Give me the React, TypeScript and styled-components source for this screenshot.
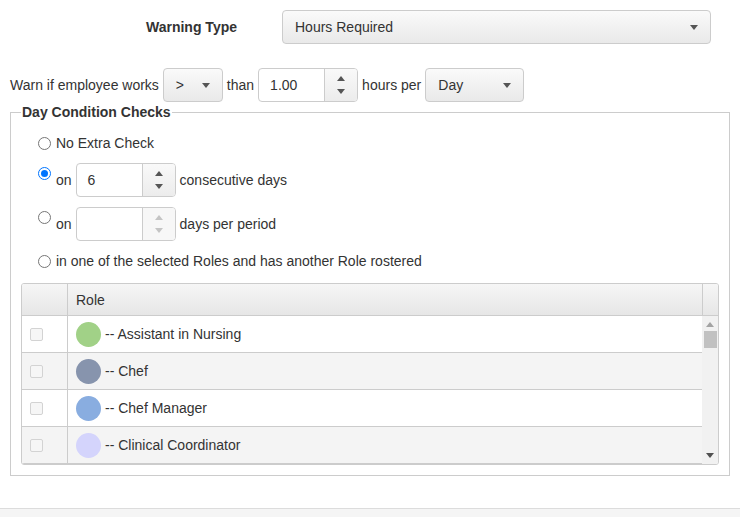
import React from "react";
import styled, { createGlobalStyle } from "styled-components";

const GlobalStyle = createGlobalStyle`
  html, body {
    margin: 0;
    padding: 0;
    background: #fff;
  }
  body {
    font-family: "Liberation Sans", Arial, sans-serif;
    font-size: 14px;
    color: #333;
  }
`;

const Page = styled.div`
  width: 740px;
  height: 517px;
  overflow: hidden;
  display: flex;
  flex-direction: column;
  padding-top: 10px;
  box-sizing: border-box;
`;

const TypeRow = styled.div`
  display: flex;
  align-items: center;
  padding-left: 10px;
  gap: 45px;
  height: 34px;
`;

const TypeLabel = styled.label`
  width: 227px;
  text-align: right;
  font-weight: bold;
`;

const WarnRow = styled.div`
  display: flex;
  align-items: center;
  gap: 4px;
  padding-left: 10px;
  margin-top: 24px;
  height: 34px;
`;

const SelectBox = styled.div<{ $width: number }>`
  width: ${({ $width }) => $width}px;
  height: 34px;
  box-sizing: border-box;
  display: flex;
  align-items: center;
  justify-content: space-between;
  padding: 0 12px;
  border: 1px solid #ccc;
  border-radius: 4px;
  background: linear-gradient(#fafafa, #e9e9e9);
  color: #333;
`;

const Caret = styled.span<{ $color?: string }>`
  width: 0;
  height: 0;
  border-left: 4px solid transparent;
  border-right: 4px solid transparent;
  border-top: 5px solid ${({ $color }) => $color || "#555"};
`;

const CaretUp = styled.span<{ $color?: string }>`
  width: 0;
  height: 0;
  border-left: 4px solid transparent;
  border-right: 4px solid transparent;
  border-bottom: 5px solid ${({ $color }) => $color || "#555"};
`;

const Spinner = styled.div`
  width: 100px;
  height: 34px;
  box-sizing: border-box;
  display: flex;
  border: 1px solid #ccc;
  border-radius: 4px;
  background: #fff;
  overflow: hidden;
`;

const SpinValue = styled.div`
  flex: 1;
  display: flex;
  align-items: center;
  padding-left: 11px;
`;

const SpinButtons = styled.div<{ $disabled?: boolean }>`
  width: 32px;
  border-left: 1px solid #ccc;
  background: ${({ $disabled }) => ($disabled ? "#f7f7f7" : "linear-gradient(#f9f9f9, #ececec)")};
  display: flex;
  flex-direction: column;
  align-items: center;
  justify-content: center;
  gap: 8px;
`;

const Fieldset = styled.fieldset`
  margin: 2px 0 0 10px;
  width: 720px;
  box-sizing: border-box;
  border: 1px solid #ccc;
  padding: 0 10px 10px 10px;
`;

const Legend = styled.legend`
  font-weight: bold;
  padding: 0 1px;
  line-height: 16px;
`;

const OptionList = styled.div`
  display: flex;
  flex-direction: column;
  gap: 10px;
  padding: 13px 0 0 17px;
`;

const Option = styled.label<{ $tall?: boolean }>`
  display: flex;
  align-items: center;
  height: ${({ $tall }) => ($tall ? 34 : 20)}px;
  gap: 4px;
`;

const Radio = styled.span<{ $checked?: boolean; $top?: boolean }>`
  width: 13px;
  height: 13px;
  box-sizing: border-box;
  border-radius: 50%;
  border: 1px solid ${({ $checked }) => ($checked ? "#0075ff" : "#767676")};
  background: #fff;
  align-self: ${({ $top }) => ($top ? "flex-start" : "center")};
  margin-top: ${({ $top }) => ($top ? 4 : 0)}px;
  margin-right: 1px;
  display: flex;
  align-items: center;
  justify-content: center;
  flex-shrink: 0;

  &::after {
    content: "";
    width: 7px;
    height: 7px;
    border-radius: 50%;
    background: ${({ $checked }) => ($checked ? "#0075ff" : "transparent")};
  }
`;

const Grid = styled.div`
  margin-top: 12px;
  border: 1px solid #ccc;
  border-radius: 3px;
  overflow: hidden;
`;

const GridHeader = styled.div`
  display: flex;
  height: 31px;
  border-bottom: 1px solid #ccc;
  background: linear-gradient(#f6f6f6, #e6e6e6);
`;

const CheckCol = styled.div`
  width: 37px;
  padding-left: 8px;
  border-right: 1px solid #ccc;
  display: flex;
  align-items: center;
  flex-shrink: 0;
`;

const RoleHeader = styled.div`
  flex: 1;
  display: flex;
  align-items: center;
  padding-left: 8px;
  border-right: 1px solid #ccc;
`;

const ScrollHeader = styled.div`
  width: 15px;
`;

const GridBody = styled.div`
  display: flex;
  height: 148px;
  overflow: hidden;
`;

const Rows = styled.div`
  flex: 1;
  display: flex;
  flex-direction: column;
`;

const Row = styled.div<{ $alt: boolean }>`
  display: flex;
  height: 36px;
  flex-shrink: 0;
  border-bottom: 1px solid #ccc;
  background: ${({ $alt }) => ($alt ? "#f4f4f4" : "#fff")};
`;

const Checkbox = styled.span`
  width: 13px;
  height: 13px;
  box-sizing: border-box;
  border: 1px solid #d3d3d3;
  border-radius: 2px;
  background: #f6f6f6;
`;

const RoleCell = styled.div`
  flex: 1;
  display: flex;
  align-items: center;
  padding-left: 8px;
  gap: 4px;
`;

const Dot = styled.span<{ $color: string }>`
  width: 25px;
  height: 25px;
  border-radius: 50%;
  background: ${({ $color }) => $color};
`;

const ScrollTrack = styled.div`
  width: 16px;
  background: #f1f1f1;
  display: flex;
  flex-direction: column;
  align-items: center;
  padding: 6px 0 6px;
  box-sizing: border-box;
`;

const Thumb = styled.div`
  width: 13px;
  height: 17px;
  background: #c1c1c1;
  margin-top: 4px;
`;

const Spacer = styled.div`
  flex: 1;
`;

const Footer = styled.div`
  margin-top: auto;
  height: 8px;
  border-top: 1px solid #dcdcdc;
  background: #f5f5f5;
`;

const roles = [
  { name: "Assistant in Nursing", color: "#a1d187" },
  { name: "Chef", color: "#8794ad" },
  { name: "Chef Manager", color: "#89ade0" },
  { name: "Clinical Coordinator", color: "#d4d4fc" },
];

function NumberSpinner({ value, disabled }: { value: string; disabled?: boolean }) {
  const arrow = disabled ? "#c4c4c4" : "#555";
  return (
    <Spinner>
      <SpinValue>{value}</SpinValue>
      <SpinButtons $disabled={disabled}>
        <CaretUp $color={arrow} />
        <Caret $color={arrow} />
      </SpinButtons>
    </Spinner>
  );
}

export default function App() {
  return (
    <>
      <GlobalStyle />
      <Page>
        <TypeRow>
          <TypeLabel>Warning Type</TypeLabel>
          <SelectBox $width={429}>
            Hours Required
            <Caret />
          </SelectBox>
        </TypeRow>

        <WarnRow>
          <span>Warn if employee works</span>
          <SelectBox $width={60}>
            &gt;
            <Caret />
          </SelectBox>
          <span>than</span>
          <NumberSpinner value="1.00" />
          <span>hours per</span>
          <SelectBox $width={99}>
            Day
            <Caret />
          </SelectBox>
        </WarnRow>

        <Fieldset>
          <Legend>Day Condition Checks</Legend>
          <OptionList>
            <Option>
              <Radio />
              No Extra Check
            </Option>
            <Option $tall>
              <Radio $checked $top />
              on
              <NumberSpinner value="6" />
              <span>consecutive days</span>
            </Option>
            <Option $tall>
              <Radio $top />
              on
              <NumberSpinner value="" disabled />
              <span>days per period</span>
            </Option>
            <Option>
              <Radio />
              in one of the selected Roles and has another Role rostered
            </Option>
          </OptionList>

          <Grid>
            <GridHeader>
              <CheckCol />
              <RoleHeader>Role</RoleHeader>
              <ScrollHeader />
            </GridHeader>
            <GridBody>
              <Rows>
                {roles.map((r, i) => (
                  <Row key={r.name} $alt={i % 2 === 1}>
                    <CheckCol>
                      <Checkbox />
                    </CheckCol>
                    <RoleCell>
                      <Dot $color={r.color} />
                      -- {r.name}
                    </RoleCell>
                  </Row>
                ))}
              </Rows>
              <ScrollTrack>
                <CaretUp $color="#a3a3a3" />
                <Thumb />
                <Spacer />
                <Caret $color="#505050" />
              </ScrollTrack>
            </GridBody>
          </Grid>
        </Fieldset>

        <Footer />
      </Page>
    </>
  );
}
